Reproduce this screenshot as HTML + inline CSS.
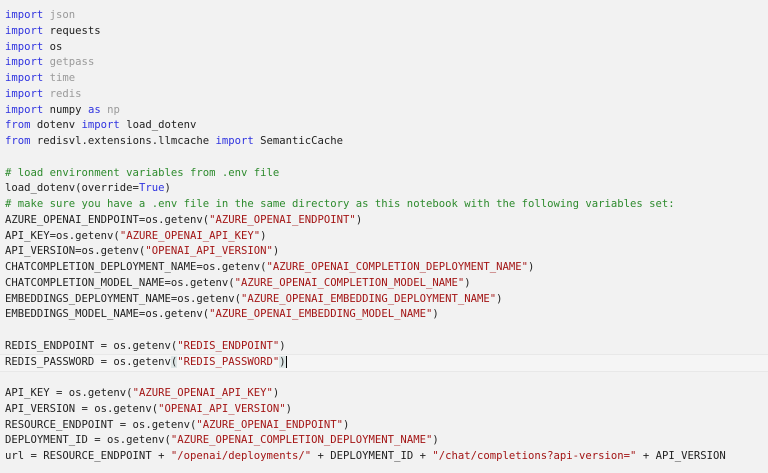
<!DOCTYPE html>
<html><head><meta charset="utf-8"><style>
html,body{margin:0;padding:0;background:#f2f2f2;width:768px;height:473px;overflow:hidden}
pre{margin:0;position:absolute;left:5px;top:8px;font-family:"DejaVu Sans Mono","Liberation Mono",monospace;font-size:10.6px;line-height:15.75px;color:#222}
.k{color:#2f33e0}.s{color:#a31515}.c{color:#2e8b2e}.g{color:#9a9a9a}
.hl{position:absolute;left:0;width:768px;top:354px;height:16px;background:#f5f5f5;border-top:1px solid #e8e8e8;border-bottom:1px solid #e8e8e8}
.br{background:#dde6e6}
.cu{border-right:1.5px solid #000}
</style></head><body>
<div class="hl"></div>
<pre><span class="k">import</span> <span class="g">json</span>
<span class="k">import</span> requests
<span class="k">import</span> os
<span class="k">import</span> <span class="g">getpass</span>
<span class="k">import</span> <span class="g">time</span>
<span class="k">import</span> <span class="g">redis</span>
<span class="k">import</span> numpy <span class="k">as</span> <span class="g">np</span>
<span class="k">from</span> dotenv <span class="k">import</span> load_dotenv
<span class="k">from</span> redisvl.extensions.llmcache <span class="k">import</span> SemanticCache

<span class="c"># load environment variables from .env file</span>
load_dotenv(override=<span class="k">True</span>)
<span class="c"># make sure you have a .env file in the same directory as this notebook with the following variables set:</span>
AZURE_OPENAI_ENDPOINT=os.getenv(<span class="s">"AZURE_OPENAI_ENDPOINT"</span>)
API_KEY=os.getenv(<span class="s">"AZURE_OPENAI_API_KEY"</span>)
API_VERSION=os.getenv(<span class="s">"OPENAI_API_VERSION"</span>)
CHATCOMPLETION_DEPLOYMENT_NAME=os.getenv(<span class="s">"AZURE_OPENAI_COMPLETION_DEPLOYMENT_NAME"</span>)
CHATCOMPLETION_MODEL_NAME=os.getenv(<span class="s">"AZURE_OPENAI_COMPLETION_MODEL_NAME"</span>)
EMBEDDINGS_DEPLOYMENT_NAME=os.getenv(<span class="s">"AZURE_OPENAI_EMBEDDING_DEPLOYMENT_NAME"</span>)
EMBEDDINGS_MODEL_NAME=os.getenv(<span class="s">"AZURE_OPENAI_EMBEDDING_MODEL_NAME"</span>)

REDIS_ENDPOINT = os.getenv(<span class="s">"REDIS_ENDPOINT"</span>)
REDIS_PASSWORD = os.getenv<span class="br">(</span><span class="s">"REDIS_PASSWORD"</span><span class="br cu">)</span>

API_KEY = os.getenv(<span class="s">"AZURE_OPENAI_API_KEY"</span>)
API_VERSION = os.getenv(<span class="s">"OPENAI_API_VERSION"</span>)
RESOURCE_ENDPOINT = os.getenv(<span class="s">"AZURE_OPENAI_ENDPOINT"</span>)
DEPLOYMENT_ID = os.getenv(<span class="s">"AZURE_OPENAI_COMPLETION_DEPLOYMENT_NAME"</span>)
url = RESOURCE_ENDPOINT + <span class="s">"/openai/deployments/"</span> + DEPLOYMENT_ID + <span class="s">"/chat/completions?api-version="</span> + API_VERSION</pre>
</body></html>
